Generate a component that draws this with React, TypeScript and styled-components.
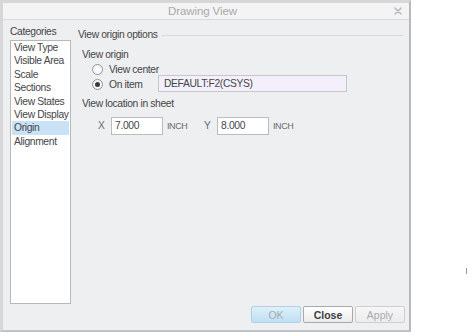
import React from "react";
import styled, { createGlobalStyle, css } from "styled-components";

const Global = createGlobalStyle`
  html, body { margin: 0; padding: 0; background: #ffffff; }
  body { font-family: "Liberation Sans", Arial, sans-serif; }
  * { box-sizing: border-box; }
`;

const Page = styled.div`
  position: relative;
  width: 474px;
  height: 336px;
  background: #ffffff;
  overflow: hidden;
`;

const Window = styled.div`
  width: 411px;
  height: 332px;
  background: #eeeff1;
  border-left: 3px solid #d7d7d9;
  border-top: 3px solid #d7d7d9;
  border-right: 2px solid #b9b9bc;
  border-bottom: 2px solid #c2c2c5;
  display: flex;
  flex-direction: column;
`;

const TitleBar = styled.div`
  height: 17px;
  flex: none;
  display: flex;
  align-items: center;
  background: #f4f4f5;
  border-bottom: 1px solid #dadadc;
  padding-right: 6px;
`;

const Title = styled.div`
  flex: 1;
  text-align: center;
  padding-left: 8px;
  font-size: 11.5px;
  color: #a9a9ab;
  letter-spacing: -0.1px;
`;

const CloseX = styled.svg`
  width: 8px;
  height: 8px;
  flex: none;
  margin-right: 1px;
`;

const Body = styled.div`
  flex: 1;
  display: flex;
  padding: 5px 0 0 7px;
`;

const LeftCol = styled.div`
  width: 61px;
  display: flex;
  flex-direction: column;
`;

const Label = styled.div`
  font-size: 10.3px;
  line-height: 14px;
  height: 14px;
  color: #454547;
  letter-spacing: -0.35px;
  white-space: nowrap;
`;

const ListBox = styled.div`
  margin-top: 1px;
  height: 264px;
  background: #ffffff;
  border: 1px solid #b8b8ba;
  padding: 0 1px;
`;

const ListItem = styled.div<{ $selected?: boolean }>`
  height: 13.4px;
  line-height: 13.4px;
  padding-left: 2px;
  font-size: 10.3px;
  letter-spacing: -0.35px;
  color: #454547;
  white-space: nowrap;
  ${(p) =>
    p.$selected &&
    css`
      background: #c9e2f6;
    `}
`;

const RightCol = styled.div`
  flex: 1;
  margin-left: 7px;
  padding-right: 6px;
  display: flex;
  flex-direction: column;
`;

const GroupHeader = styled.div`
  display: flex;
  align-items: center;
  gap: 4px;
  margin-top: 3px;
`;

const GroupLine = styled.div`
  flex: 1;
  height: 1px;
  background: #d9d9dc;
`;

const GroupContent = styled.div`
  padding-left: 4px;
  display: flex;
  flex-direction: column;
`;

const SubLabel = styled(Label)<{ $top: number }>`
  margin-top: ${(p) => p.$top}px;
`;

const RadioRow = styled.div<{ $top: number }>`
  display: flex;
  align-items: center;
  height: 15px;
  padding-left: 10px;
  margin-top: ${(p) => p.$top}px;
`;

const RadioCircle = styled.span<{ $checked?: boolean }>`
  width: 11px;
  height: 11px;
  border-radius: 50%;
  border: 1px solid #939396;
  background: radial-gradient(circle at 50% 40%, #ffffff 0%, #f2f2f2 100%);
  display: flex;
  align-items: center;
  justify-content: center;
  flex: none;
  &::after {
    content: "";
    width: 5px;
    height: 5px;
    border-radius: 50%;
    background: ${(p) => (p.$checked ? "#3a3a3a" : "transparent")};
  }
`;

const RadioText = styled(Label)`
  margin-left: 6px;
  width: 49px;
`;

const ItemField = styled.div`
  width: 189px;
  height: 17px;
  margin-top: -3px;
  border: 1px solid #c6c6c9;
  background: #f3f0fb;
  font-size: 10.3px;
  letter-spacing: -0.35px;
  line-height: 15px;
  padding-left: 5px;
  color: #454547;
`;

const CoordRow = styled.div`
  display: flex;
  align-items: center;
  margin-top: 5px;
  padding-left: 16px;
  height: 19px;
`;

const AxisLabel = styled.div`
  font-size: 10.3px;
  color: #6a6a6d;
  width: 13px;
`;

const NumInput = styled.div`
  width: 52px;
  height: 18px;
  background: #ffffff;
  border: 1px solid #bcbcbf;
  font-size: 10.3px;
  letter-spacing: -0.35px;
  line-height: 16px;
  padding-left: 3px;
  color: #454547;
`;

const Unit = styled.div`
  font-size: 9px;
  color: #6a6a6d;
  margin-left: 4px;
  width: 37px;
  letter-spacing: -0.4px;
`;

const Footer = styled.div`
  height: 24px;
  flex: none;
  display: flex;
  justify-content: flex-end;
  align-items: flex-start;
  padding-right: 4px;
  gap: 2px;
`;

const Button = styled.div<{ $variant: "primary" | "normal" | "disabled" }>`
  width: 50px;
  height: 17px;
  display: flex;
  align-items: center;
  justify-content: center;
  font-size: 10.5px;
  border-radius: 2px;
  ${(p) =>
    p.$variant === "primary"
      ? css`
          background: linear-gradient(#dff0fb, #bfdff2);
          border: 1px solid #aed1e8;
          color: #a3adb3;
        `
      : p.$variant === "normal"
      ? css`
          background: linear-gradient(#ffffff, #ebebec);
          border: 1px solid #a9a9ac;
          color: #3d3d3f;
          font-weight: bold;
        `
      : css`
          background: linear-gradient(#f6f6f7, #ececed);
          border: 1px solid #cfcfd2;
          color: #aaaaad;
        `}
`;

const Speck = styled.div`
  position: absolute;
  left: 466px;
  top: 268px;
  width: 1px;
  height: 6px;
  background: #9a9a9a;
`;

const categories = [
  "View Type",
  "Visible Area",
  "Scale",
  "Sections",
  "View States",
  "View Display",
  "Origin",
  "Alignment",
];

export default function App() {
  return (
    <>
      <Global />
      <Page>
        <Window>
          <TitleBar>
            <Title>Drawing View</Title>
            <CloseX viewBox="0 0 8 8">
              <path d="M1 1 L7 7 M7 1 L1 7" stroke="#b8b8bb" strokeWidth="1.5" strokeLinecap="round" />
            </CloseX>
          </TitleBar>
          <Body>
            <LeftCol>
              <Label>Categories</Label>
              <ListBox>
                {categories.map((c) => (
                  <ListItem key={c} $selected={c === "Origin"}>
                    {c}
                  </ListItem>
                ))}
              </ListBox>
            </LeftCol>
            <RightCol>
              <GroupHeader>
                <Label>View origin options</Label>
                <GroupLine />
              </GroupHeader>
              <GroupContent>
                <SubLabel $top={6}>View origin</SubLabel>
                <RadioRow $top={0}>
                  <RadioCircle />
                  <RadioText>View center</RadioText>
                </RadioRow>
                <RadioRow $top={0}>
                  <RadioCircle $checked />
                  <RadioText>On item</RadioText>
                  <ItemField>DEFAULT:F2(CSYS)</ItemField>
                </RadioRow>
                <SubLabel $top={5}>View location in sheet</SubLabel>
                <CoordRow>
                  <AxisLabel>X</AxisLabel>
                  <NumInput>7.000</NumInput>
                  <Unit>INCH</Unit>
                  <AxisLabel>Y</AxisLabel>
                  <NumInput>8.000</NumInput>
                  <Unit>INCH</Unit>
                </CoordRow>
              </GroupContent>
            </RightCol>
          </Body>
          <Footer>
            <Button $variant="primary">OK</Button>
            <Button $variant="normal">Close</Button>
            <Button $variant="disabled">Apply</Button>
          </Footer>
        </Window>
        <Speck />
      </Page>
    </>
  );
}
